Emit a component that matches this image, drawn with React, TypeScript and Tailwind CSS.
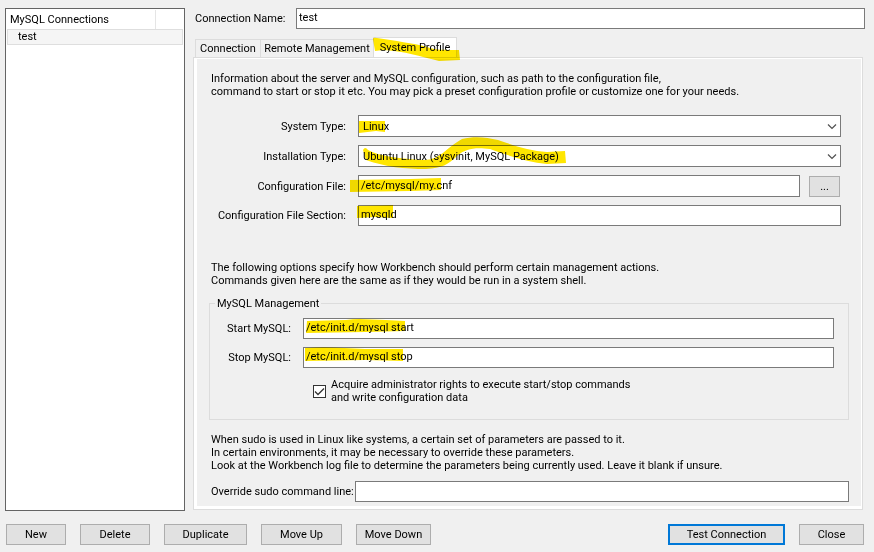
import type { ReactNode } from "react";

const inputClass = "block w-full border border-[#7a7a7a] bg-white px-[2px] pb-[2px] text-black outline-none";

function Marker({ className, width, height, d }: { className: string; width: number; height: number; d: string }) {
  return (
    <svg
      aria-hidden="true"
      className={"pointer-events-none absolute mix-blend-multiply " + className}
      width={width}
      height={height}
      viewBox={`0 0 ${width} ${height}`}
    >
      <path d={d} fill="#ffe600" />
    </svg>
  );
}

function Select({ id, value, children }: { id: string; value: string; children?: ReactNode }) {
  return (
    <div className="relative">
      <select
        id={id}
        defaultValue={value}
        className="block h-[22px] w-full appearance-none border border-[#7a7a7a] bg-white px-1 text-black outline-none"
      >
        <option>{value}</option>
      </select>
      <svg
        aria-hidden="true"
        className="pointer-events-none absolute top-2 right-1"
        width="10"
        height="7"
        viewBox="0 0 10 7"
        fill="none"
        stroke="#505050"
        strokeWidth="1.2"
      >
        <path d="M1 1.5 L5 5.5 L9 1.5" />
      </svg>
      {children}
    </div>
  );
}

function Button({ className, children }: { className: string; children: ReactNode }) {
  return (
    <button type="button" className={"h-[21px] bg-[#e1e1e1] text-center text-black " + className}>
      {children}
    </button>
  );
}

const plain = "border border-[#adadad]";

export default function App() {
  return (
    <div className="flex min-h-screen flex-col bg-[#f0f0f0] font-['Tahoma','Roboto',sans-serif] text-[11px] leading-[13px] text-black">
      <div className="flex flex-1 gap-2 pt-2 pr-[9px] pl-[5px]">
        <aside className="w-[180px] shrink-0 border border-[#646464] bg-white p-px">
          <div className="flex h-[19px]">
            <h2 className="w-[149px] border-r border-[#e5e5e5] pt-[3px] pl-[3px]">MySQL Connections</h2>
          </div>
          <ul>
            <li className="h-4 border border-[#dedede] bg-[#f5f5f5] pl-[10px]">test</li>
          </ul>
        </aside>

        <main className="flex min-w-0 flex-1 flex-col pb-px">
          <div className="flex items-center pl-[2px]">
            <label htmlFor="name" className="w-[101px] shrink-0">
              Connection Name:
            </label>
            <input id="name" className={"h-[21px] " + inputClass} defaultValue="test" />
          </div>

          <div role="tablist" className="mt-2 flex items-end pl-[2px] whitespace-nowrap">
            <button role="tab" type="button" className="h-[18px] w-[66px] border border-b-0 border-[#dcdcdc]">
              Connection
            </button>
            <button role="tab" type="button" className="h-[18px] w-[112px] border border-x-0 border-b-0 border-[#dcdcdc]">
              Remote Management
            </button>
            <button
              role="tab"
              type="button"
              aria-selected="true"
              className="relative h-5 w-[84px] border border-b-0 border-[#dcdcdc] bg-white"
            >
              System Profile
              <Marker
                className="-top-px -left-px"
                width={90}
                height={25}
                d="M0 2 Q0 0 4 1 C22 4 40 6 54 10 C62 13 70 13 86 13 L87 23 L66 24 C50 20 40 17 28 15 C16 13 8 13 2 14 Z"
              />
            </button>
          </div>

          <div role="tabpanel" className="mr-[2px] flex-1 border border-[#dcdcdc]">
            <div className="h-full border-t border-r border-b-3 border-l-3 border-white px-3 pt-[13px] pb-1">
              <p className="px-[2px]">
                Information about the server and MySQL configuration, such as path to the configuration file,
                <br />
                command to start or stop it etc. You may pick a preset configuration profile or customize one for your
                needs.
              </p>

              <div className="mt-[17px] grid grid-cols-[135px_1fr] items-center gap-x-3 gap-y-2 pr-2 pl-[2px]">
                <label htmlFor="system" className="text-right">
                  System Type:
                </label>
                <Select id="system" value="Linux">
                  <Marker className="top-1 left-0" width={28} height={15} d="M1 2 H27 V13 L18 12 L1 14 Z" />
                </Select>

                <label htmlFor="install" className="text-right">
                  Installation Type:
                </label>
                <Select id="install" value="Ubuntu Linux (sysvinit, MySQL Package)">
                  <Marker
                    className="-top-2 left-1"
                    width={206}
                    height={34}
                    d="M1 13 Q3 9 6 13 C16 19 40 22 62 23 C78 23 84 11 100 2 C112 -1 124 0 136 3 C150 8 168 14 185 15 L203 14 L204 26 L185 27 C165 25 145 18 128 12 C112 10 104 12 96 18 C86 28 80 31 64 32 C42 32 24 30 4 23 Z"
                  />
                </Select>

                <label htmlFor="config" className="text-right">
                  Configuration File:
                </label>
                <div className="flex items-end gap-[9px] pr-px">
                  <div className="relative flex-1">
                    <input id="config" className={"h-[22px] " + inputClass} defaultValue="/etc/mysql/my.cnf" />
                    <Marker className="top-[3px] -left-2" width={92} height={15} d="M0 2 L60 1 L91 0 V12 L60 13 L0 14 Z" />
                  </div>
                  <Button className={"w-[31px] " + plain}>...</Button>
                </div>

                <label htmlFor="section" className="text-right whitespace-nowrap">
                  Configuration File Section:
                </label>
                <div className="relative">
                  <input id="section" className={"h-[21px] " + inputClass} defaultValue="mysqld" />
                  <Marker className="top-0 -left-px" width={37} height={14} d="M0 1 L36 0 V13 L18 12 L0 13 Z" />
                </div>
              </div>

              <p className="mt-[35px] px-[2px]">
                The following options specify how Workbench should perform certain management actions.
                <br />
                Commands given here are the same as if they would be run in a system shell.
              </p>

              <fieldset className="mt-[10px] border border-[#dcdcdc] pr-[14px] pb-[15px] pl-[10px]">
                <legend className="-ml-[5px] px-[2px]">MySQL Management</legend>
                <div className="mt-2 grid grid-cols-[71px_1fr] items-center gap-x-3 gap-y-2">
                  <label htmlFor="start" className="text-right">
                    Start MySQL:
                  </label>
                  <div className="relative">
                    <input id="start" className={"h-[21px] " + inputClass} defaultValue="/etc/init.d/mysql start" />
                    <Marker
                      className="top-px left-[3px]"
                      width={101}
                      height={15}
                      d="M1 2 L40 1 C54 -1 66 1 80 1 L99 2 V12 L60 13 L0 14 Z"
                    />
                  </div>
                  <label htmlFor="stop" className="text-right">
                    Stop MySQL:
                  </label>
                  <div className="relative">
                    <input id="stop" className={"h-[21px] " + inputClass} defaultValue="/etc/init.d/mysql stop" />
                    <Marker
                      className="top-0 left-[2px]"
                      width={99}
                      height={16}
                      d="M0 1 C20 -1 40 1 60 2 L98 2 V14 L60 13 L0 14 Z"
                    />
                  </div>
                </div>
                <div className="mt-[10px] flex items-center gap-[5px] pl-[93px]">
                  <span className="relative block size-[13px]">
                    <input
                      id="admin"
                      type="checkbox"
                      defaultChecked
                      className="peer block size-[13px] appearance-none border border-[#333333] bg-white"
                    />
                    <svg
                      aria-hidden="true"
                      className="pointer-events-none absolute inset-0 hidden peer-checked:block"
                      width="13"
                      height="13"
                      viewBox="0 0 13 13"
                      fill="none"
                      stroke="#333333"
                      strokeWidth="1.3"
                    >
                      <path d="M2 6.5 L5 9.5 L11 3.5" />
                    </svg>
                  </span>
                  <label htmlFor="admin">
                    Acquire administrator rights to execute start/stop commands
                    <br />
                    and write configuration data
                  </label>
                </div>
              </fieldset>

              <p className="mt-[13px] px-[2px]">
                When sudo is used in Linux like systems, a certain set of parameters are passed to it.
                <br />
                In certain environments, it may be necessary to override these parameters.
                <br />
                Look at the Workbench log file to determine the parameters being currently used. Leave it blank if
                unsure.
              </p>

              <div className="mt-[9px] flex items-center pl-[2px]">
                <label htmlFor="sudo" className="w-36 shrink-0 whitespace-nowrap">
                  Override sudo command line:
                </label>
                <input id="sudo" className={"h-[21px] " + inputClass} />
              </div>
            </div>
          </div>
        </main>
      </div>

      <footer className="flex gap-[14px] pt-[13px] pr-[10px] pb-[7px] pl-[6px]">
        <Button className={"w-[60px] " + plain}>New</Button>
        <Button className={"w-[70px] " + plain}>Delete</Button>
        <Button className={"w-[83px] " + plain}>Duplicate</Button>
        <Button className={"w-[81px] " + plain}>Move Up</Button>
        <Button className={"w-[75px] " + plain}>Move Down</Button>
        <Button className="ml-auto w-[117px] border-2 border-[#0078d7]">Test Connection</Button>
        <Button className={"w-[65px] " + plain}>Close</Button>
      </footer>
    </div>
  );
}
